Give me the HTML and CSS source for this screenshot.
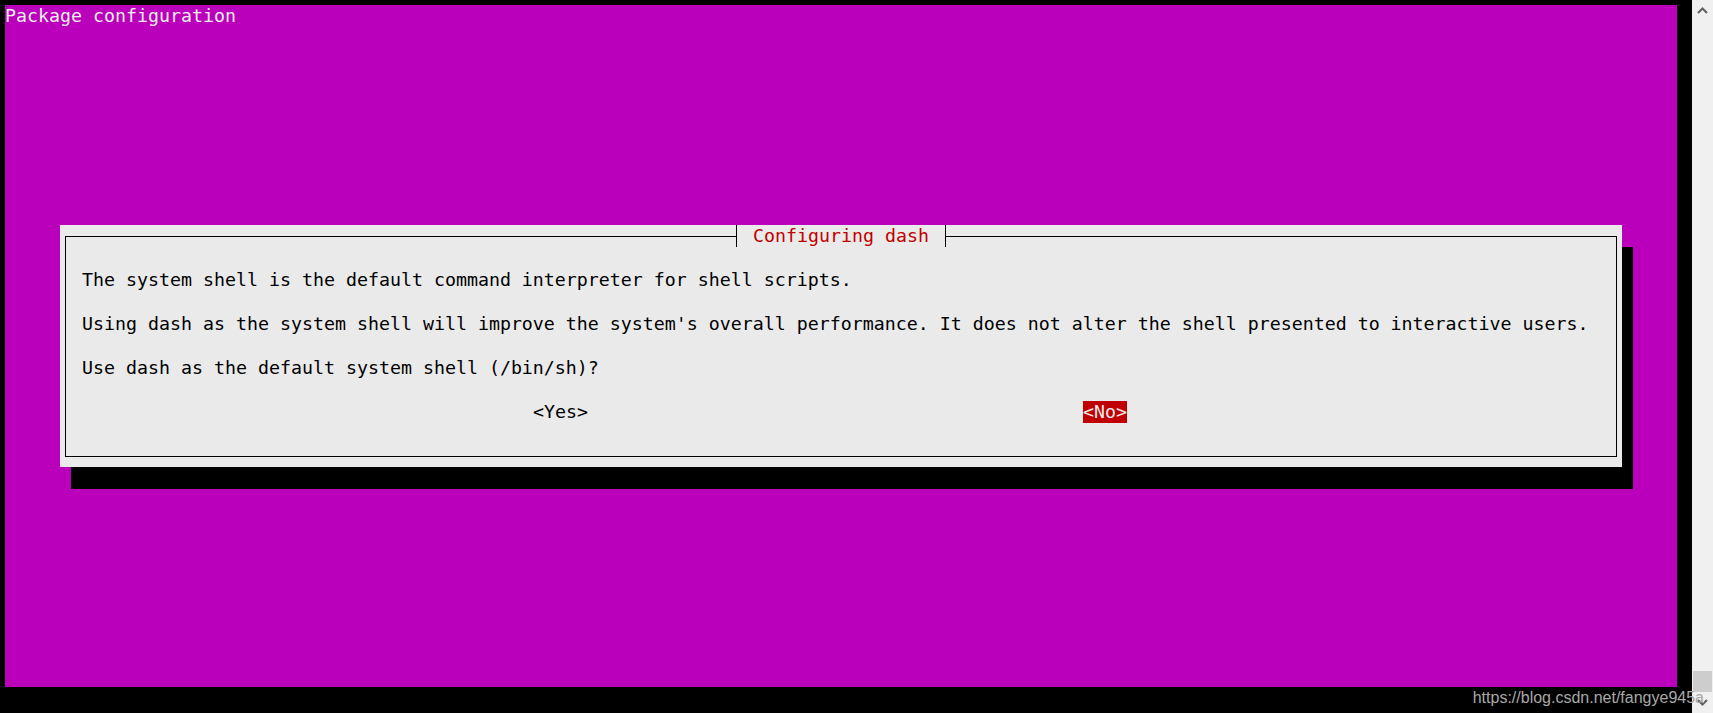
FILE: index.html
```html
<!DOCTYPE html>
<html lang="en">
<head>
  <meta charset="UTF-8">
  <meta name="viewport" content="width=device-width, initial-scale=1.0">
  <title>Package configuration</title>
  <link rel="stylesheet" href="styles.css">
</head>
<body>
  <div class="window">
    <div class="term">
      <div class="screen">
        <div class="header">Package configuration</div>

        <div class="dialog">
          <div class="dialog-title">Configuring dash</div>
          <div class="frame">
            <p>The system shell is the default command interpreter for shell scripts.</p>
            <p>Using dash as the system shell will improve the system's overall performance. It does not alter the shell presented to interactive users.</p>
            <p>Use dash as the default system shell (/bin/sh)?</p>
            <div class="buttons">
              <span class="btn">&lt;Yes&gt;</span>
              <span class="btn active">&lt;No&gt;</span>
            </div>
          </div>
        </div>
      </div>
    </div>

    <div class="scrollbar">
      <svg class="arrow" width="21" height="21" viewBox="0 0 21 21">
        <path d="M6 13 L10.5 8.5 L15 13" fill="none" stroke="#606060" stroke-width="2"/>
      </svg>
      <div class="track"></div>
      <div class="thumb"></div>
      <svg class="arrow" width="21" height="21" viewBox="0 0 21 21">
        <path d="M6 8 L10.5 12.5 L15 8" fill="none" stroke="#606060" stroke-width="2"/>
      </svg>
    </div>

    <div class="watermark">https://blog.csdn.net/fangye945a</div>
  </div>
</body>
</html>
```

FILE: styles.css
```css
body {
  margin: 0;
  background-color: #000;
  font-family: "DejaVu Sans Mono", monospace;
  font-size: 18.27px;
  line-height: 22px;
  overflow: hidden;
}

.window {
  position: relative;
  display: flex;
  height: 713px;
}

.term {
  flex: 1;
  padding: 5px;
  background-color: #000;
}

/* terminal grid: 152 cols x 31 rows, cell 11x22 */
.screen {
  display: grid;
  grid-template-columns: repeat(152, 11px);
  grid-template-rows: repeat(31, 22px);
  background-color: #bb00bb;
  width: 1672px;
}

.header {
  grid-column: 1 / span 40;
  grid-row: 1;
  color: #eeeeee;
  white-space: pre;
}

.dialog {
  grid-column: 6 / span 142;
  grid-row: 11 / span 11;
  position: relative;
  display: flex;
  background-color: #eaeaea;
  box-shadow: 11px 22px 0 #000;
}

.dialog-title {
  position: absolute;
  top: 0;
  left: 676px;
  height: 22px;
  padding: 0 16px;
  border-left: 1px solid #000;
  border-right: 1px solid #000;
  background-color: #eaeaea;
  color: #c00000;
  white-space: pre;
}

.frame {
  flex: 1;
  margin: 11px 5px 10px 5px;
  padding: 32px 0 0 16px;
  border: 1px solid #000;
  color: #000;
}

.frame p {
  margin: 0 0 22px 0;
  white-space: pre;
}

.buttons {
  display: flex;
  gap: 495px;
  padding-left: 451px;
}

.btn {
  white-space: pre;
}

.btn.active {
  background-color: #c00000;
  color: #eaeaea;
}

.scrollbar {
  width: 21px;
  display: flex;
  flex-direction: column;
  background-color: #f0f0f0;
}

.track {
  flex: 1;
}

.thumb {
  height: 21px;
  margin: 0 1px;
  background-color: #cdcdcd;
}

.arrow {
  display: block;
}

.watermark {
  position: absolute;
  right: 9px;
  bottom: 6px;
  font-family: "Liberation Sans", Arial, sans-serif;
  font-size: 16px;
  line-height: 18px;
  color: #a8a8a8;
}
```
